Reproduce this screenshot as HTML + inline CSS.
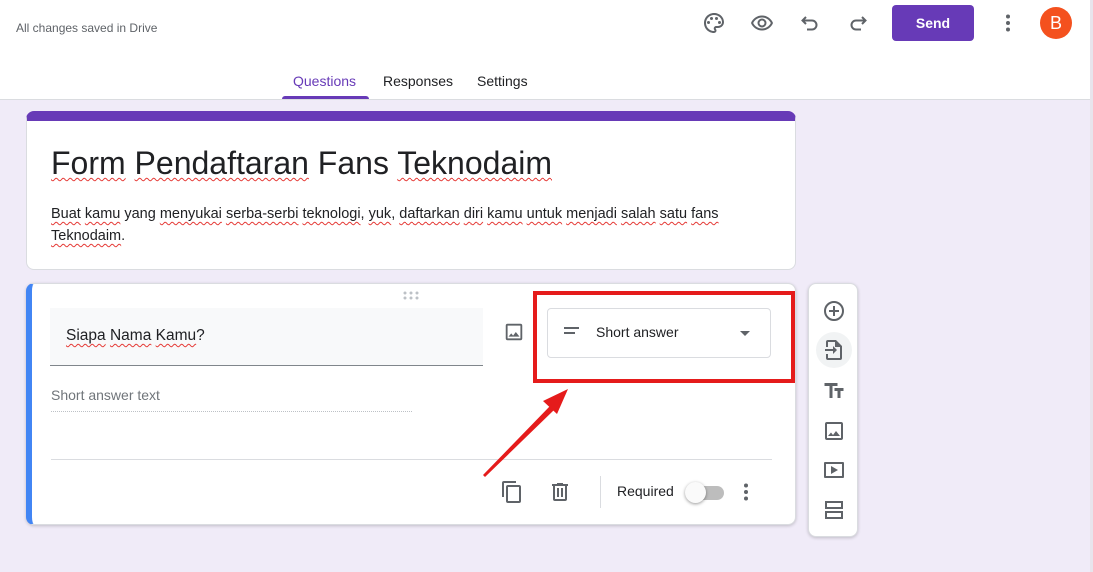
<!DOCTYPE html>
<html><head><meta charset="utf-8"><style>
*{box-sizing:border-box;margin:0;padding:0}
body{width:1093px;height:572px;overflow:hidden;background:#f0ebf8;font-family:"Liberation Sans",Arial,sans-serif;position:relative}
.top{position:absolute;left:0;top:0;width:1090px;height:100px;background:#fff;border-bottom:1px solid #dadce0}
.sb{position:absolute;left:1090px;top:0;width:3px;height:572px;background:#e8e4ec}
.abs{position:absolute}
svg.i{position:absolute;fill:#5f6368}
.card{position:absolute;background:#fff;border-radius:8px;border:1px solid #dadce0}
.wavy{text-decoration:underline wavy #e53935;text-decoration-thickness:1px;text-underline-offset:3px}
</style></head><body>
<div class="top">
<div class="abs" style="left:16px;top:21px;font-size:12px;color:#5f6368">All changes saved in Drive</div>
<svg class="i" style="left:702px;top:11px" width="24" height="24" viewBox="0 0 24 24"><path d="M12 22C6.49 22 2 17.51 2 12S6.49 2 12 2s10 4.04 10 9c0 3.31-2.69 6-6 6h-1.77c-.28 0-.5.22-.5.5 0 .12.05.23.13.33.41.47.64 1.06.64 1.67A2.5 2.5 0 0 1 12 22zm0-18c-4.41 0-8 3.59-8 8s3.59 8 8 8c.28 0 .5-.22.5-.5a.54.54 0 0 0-.14-.35c-.41-.46-.63-1.05-.63-1.65a2.5 2.5 0 0 1 2.5-2.5H16c2.21 0 4-1.79 4-4 0-3.86-3.59-7-8-7z"/><circle cx="6.5" cy="11.5" r="1.5"/><circle cx="9.5" cy="7.5" r="1.5"/><circle cx="14.5" cy="7.5" r="1.5"/><circle cx="17.5" cy="11.5" r="1.5"/></svg>
<svg class="i" style="left:750px;top:11px" width="24" height="24" viewBox="0 0 24 24"><path d="M12 6.5c3.8 0 7.2 2.1 8.8 5.5-1.6 3.4-5 5.5-8.8 5.5S4.8 15.4 3.2 12C4.8 8.6 8.2 6.5 12 6.5zM12 4.5C7 4.5 2.7 7.6 1 12c1.7 4.4 6 7.5 11 7.5s9.3-3.1 11-7.5c-1.7-4.4-6-7.5-11-7.5zm0 5a2.5 2.5 0 1 1 0 5 2.5 2.5 0 0 1 0-5zm0-2a4.5 4.5 0 1 0 0 9 4.5 4.5 0 0 0 0-9z"/></svg>
<svg class="i" style="left:798px;top:11px" width="24" height="24" viewBox="0 0 24 24"><path d="M8 6L4.5 9.5 8 13M4.5 9.5H14a4.5 4.5 0 0 1 0 9H9" fill="none" stroke="#5f6368" stroke-width="2"/></svg>
<svg class="i" style="left:846px;top:11px" width="24" height="24" viewBox="0 0 24 24"><path d="M16 6l3.5 3.5L16 13M19.5 9.5H10a4.5 4.5 0 0 0 0 9h5" fill="none" stroke="#5f6368" stroke-width="2"/></svg>
<div class="abs" style="left:892px;top:5px;width:82px;height:36px;background:#673ab7;border-radius:4px;color:#fff;font-size:14px;font-weight:bold;text-align:center;line-height:36px">Send</div>
<svg class="i" style="left:996px;top:11px" width="24" height="24" viewBox="0 0 24 24"><circle cx="12" cy="5.5" r="2"/><circle cx="12" cy="12" r="2"/><circle cx="12" cy="18.5" r="2"/></svg>
<div class="abs" style="left:1040px;top:7px;width:32px;height:32px;border-radius:50%;background:#f4511e;color:#fff;font-size:18px;text-align:center;line-height:32px">B</div>
<div class="abs" style="left:293px;top:73px;font-size:14px;color:#673ab7">Questions</div>
<div class="abs" style="left:282px;top:96px;width:87px;height:3px;background:#673ab7;border-radius:3px 3px 0 0"></div>
<div class="abs" style="left:383px;top:73px;font-size:14px;color:#202124">Responses</div>
<div class="abs" style="left:477px;top:73px;font-size:14px;color:#202124">Settings</div>
</div>
<div class="sb"></div>

<div class="card" style="left:26px;top:111px;width:770px;height:159px;border-top:10px solid #673ab7;">
<div class="abs" style="left:24px;top:24px;font-size:32px;color:#202124"><span class="wavy">Form</span> <span class="wavy">Pendaftaran</span> Fans <span class="wavy">Teknodaim</span></div>
<div class="abs" style="left:24px;top:82px;width:700px;font-size:14.5px;line-height:22px;color:#202124"><span class="wavy">Buat</span> <span class="wavy">kamu</span> yang <span class="wavy">menyukai</span> <span class="wavy">serba-serbi</span> <span class="wavy">teknologi</span>, <span class="wavy">yuk</span>, <span class="wavy">daftarkan</span> <span class="wavy">diri</span> <span class="wavy">kamu</span> <span class="wavy">untuk</span> <span class="wavy">menjadi</span> <span class="wavy">salah</span> <span class="wavy">satu</span> <span class="wavy">fans</span> <span class="wavy">Teknodaim</span>.</div>
</div>

<div class="card" style="left:26px;top:283px;width:770px;height:242px;border-left:6px solid #4285f4;box-shadow:0 1px 3px rgba(0,0,0,.2)">
<svg class="abs" style="left:370px;top:7px" width="18" height="10"><g fill="#bdc1c6"><circle cx="3" cy="2" r="1.5"/><circle cx="9" cy="2" r="1.5"/><circle cx="15" cy="2" r="1.5"/><circle cx="3" cy="7" r="1.5"/><circle cx="9" cy="7" r="1.5"/><circle cx="15" cy="7" r="1.5"/></g></svg>
<div class="abs" style="left:18px;top:24px;width:433px;height:58px;background:#f8f9fa;border-bottom:1px solid #80868b"></div>
<div class="abs" style="left:34px;top:43px;font-size:15.5px;color:#202124"><span class="wavy">Siapa</span> <span class="wavy">Nama</span> <span class="wavy">Kamu</span>?</div>
<svg class="i" style="left:471px;top:37px" width="22" height="22" viewBox="0 0 24 24"><path d="M19 3H5a2 2 0 0 0-2 2v14a2 2 0 0 0 2 2h14a2 2 0 0 0 2-2V5a2 2 0 0 0-2-2zm0 16H5V5h14v14zm-5-7l-3 4-2-2.5L6 17h12z"/></svg>
<div class="abs" style="left:515px;top:24px;width:224px;height:50px;border:1px solid #dadce0;border-radius:4px"></div>
<div class="abs" style="left:532px;top:43px;width:15px;height:2px;background:#5f6368"></div>
<div class="abs" style="left:532px;top:48px;width:11px;height:2px;background:#5f6368"></div>
<div class="abs" style="left:564px;top:40px;font-size:14px;color:#202124">Short answer</div>
<div class="abs" style="left:708px;top:47px;width:0;height:0;border-left:5px solid transparent;border-right:5px solid transparent;border-top:5px solid #5f6368"></div>
<div class="abs" style="left:19px;top:103px;font-size:14px;color:#70757a">Short answer text</div>
<div class="abs" style="left:19px;top:127px;width:361px;border-bottom:1px dotted #bdc1c6"></div>
<div class="abs" style="left:19px;top:175px;width:721px;height:1px;background:#dadce0"></div>
<svg class="i" style="left:468px;top:196px" width="24" height="24" viewBox="0 0 24 24"><path d="M16 1H4a2 2 0 0 0-2 2v14h2V3h12V1zm3 4H8a2 2 0 0 0-2 2v14a2 2 0 0 0 2 2h11a2 2 0 0 0 2-2V7a2 2 0 0 0-2-2zm0 16H8V7h11v14z"/></svg>
<svg class="i" style="left:516px;top:196px" width="24" height="24" viewBox="0 0 24 24"><path d="M15 4V3H9v1H4v2h1v13a2 2 0 0 0 2 2h10a2 2 0 0 0 2-2V6h1V4h-5zm2 15H7V6h10v13zM9 8h2v9H9zm4 0h2v9h-2z"/></svg>
<div class="abs" style="left:568px;top:192px;width:1px;height:32px;background:#dadce0"></div>
<div class="abs" style="left:585px;top:199px;font-size:14px;color:#202124">Required</div>
<div class="abs" style="left:658px;top:202px;width:34px;height:14px;border-radius:7px;background:#bdbdbd"></div>
<div class="abs" style="left:653px;top:198px;width:21px;height:21px;border-radius:50%;background:#fafafa;box-shadow:0 1px 3px rgba(0,0,0,.4)"></div>
<svg class="i" style="left:702px;top:196px" width="24" height="24" viewBox="0 0 24 24"><circle cx="12" cy="5.5" r="2"/><circle cx="12" cy="12" r="2"/><circle cx="12" cy="18.5" r="2"/></svg>
</div>

<div class="abs" style="left:533px;top:291px;width:262px;height:92px;border:4px solid #e51b1b"></div>
<svg class="abs" style="left:480px;top:385px" width="100" height="95"><polygon points="3,90 70,21 74,25 5,92" fill="#e51b1b"/><polygon points="88,4 63,16 77,29" fill="#e51b1b"/></svg>

<div class="card" style="left:808px;top:283px;width:50px;height:254px;box-shadow:0 1px 3px rgba(0,0,0,.2)">
<svg class="i" style="left:13px;top:15px" width="24" height="24" viewBox="0 0 24 24"><circle cx="12" cy="12" r="9" fill="none" stroke="#5f6368" stroke-width="2"/><path d="M11 7h2v10h-2zM7 11h10v2H7z"/></svg>
<div class="abs" style="left:7px;top:48px;width:36px;height:36px;border-radius:50%;background:#f1f3f4"></div>
<svg class="i" style="left:13px;top:54px" width="24" height="24" viewBox="0 0 24 24"><path d="M14 2H6a2 2 0 0 0-2 2v5h2V4h7v5h5v11H6v-4H4v4a2 2 0 0 0 2 2h12a2 2 0 0 0 2-2V8l-6-6zM11 16l4-4-4-4v3H3v2h8z"/></svg>
<svg class="i" style="left:13px;top:95px" width="24" height="24" viewBox="0 0 24 24"><path d="M2.5 4v3h5v12h3V7h5V4zm19 5h-9v3h3v7h3v-7h3z"/></svg>
<svg class="i" style="left:13px;top:135px" width="24" height="24" viewBox="0 0 24 24"><path d="M19 3H5a2 2 0 0 0-2 2v14a2 2 0 0 0 2 2h14a2 2 0 0 0 2-2V5a2 2 0 0 0-2-2zm0 16H5V5h14v14zm-5-7l-3 4-2-2.5L6 17h12z"/></svg>
<svg class="i" style="left:13px;top:174px" width="24" height="24" viewBox="0 0 24 24"><path d="M21 4H3a1 1 0 0 0-1 1v14a1 1 0 0 0 1 1h18a1 1 0 0 0 1-1V5a1 1 0 0 0-1-1zm-1 14H4V6h16v12zM9 8v8l7-4z"/></svg>
<svg class="i" style="left:13px;top:214px" width="24" height="24" viewBox="0 0 24 24"><path d="M3 3h18v8H3zm2 2v4h14V5zM3 13h18v8H3zm2 2v4h14v-4z"/></svg>
</div>
</body></html>
